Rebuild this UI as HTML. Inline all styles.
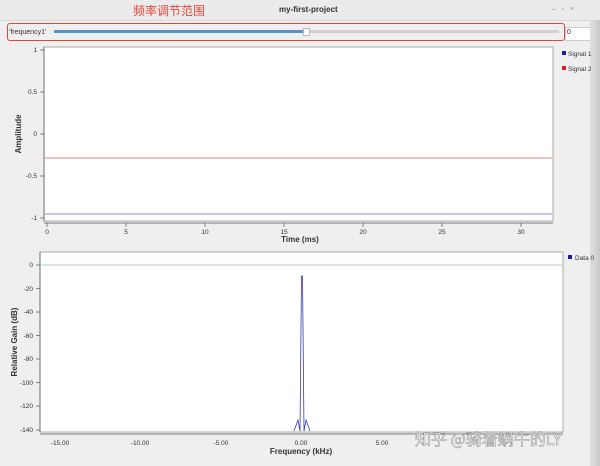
<!DOCTYPE html>
<html><head><meta charset="utf-8"><style>
body{margin:0;width:600px;height:466px;overflow:hidden;background:#efefef;font-family:"Liberation Sans","Noto Sans CJK SC",sans-serif;position:relative}
.a{position:absolute}
.t{font-size:7px;color:#333}
</style></head><body>
<div class="a" style="left:0;top:0;width:600px;height:20px;background:#ebebeb;border-bottom:1px solid #d8d8d8"></div>
<div class="a" style="left:133px;top:2px;font-size:12px;color:#e8443a">频率调节范围</div>
<div class="a" style="left:279px;top:5px;font-size:8px;font-weight:bold;color:#333">my-first-project</div>
<div class="a t" style="left:552px;top:6px;color:#999">–&nbsp;&nbsp;&nbsp;▫&nbsp;&nbsp;&nbsp;×</div>
<div class="a" style="left:7px;top:23px;width:556px;height:16px;border:1.5px solid #e0443a;border-radius:3px"></div>
<div class="a t" style="left:9px;top:29px">'frequency1'</div>
<div class="a" style="left:54px;top:30px;width:252px;height:3px;background:#5294c7"></div>
<div class="a" style="left:306px;top:30px;width:253px;height:3px;background:#d0d0d0"></div>
<div class="a" style="left:303px;top:28px;width:5px;height:6px;background:#fff;border:1px solid #bbb"></div>
<div class="a" style="left:565px;top:27px;width:28px;height:12px;background:#fff;border:1px solid #ccc"></div>
<div class="a t" style="left:567px;top:29px">0</div>
<div class="a" style="left:590px;top:20px;width:10px;height:446px;background:linear-gradient(90deg,#e0e0e0,#c9c9c9)"></div>
<svg class="a" style="left:0;top:0" width="600" height="466" font-family="Liberation Sans" font-size="6.5" fill="#333">
<rect x="44" y="47" width="509" height="174" fill="#fff" stroke="#aaa"/>
<line x1="45" y1="158" x2="552" y2="158" stroke="#e4a0a0" stroke-width="1.3"/>
<line x1="45" y1="214" x2="552" y2="214" stroke="#a8a8d8" stroke-width="1.3"/>
<g stroke="#555" stroke-width=".7">
<line x1="44" y1="47" x2="44" y2="221"/><line x1="44" y1="223" x2="553" y2="223"/>
<line x1="40" y1="50" x2="44" y2="50"/><line x1="40" y1="92" x2="44" y2="92"/><line x1="40" y1="134" x2="44" y2="134"/><line x1="40" y1="176" x2="44" y2="176"/><line x1="40" y1="218" x2="44" y2="218"/>
<line x1="47" y1="223" x2="47" y2="227"/><line x1="126" y1="223" x2="126" y2="227"/><line x1="205" y1="223" x2="205" y2="227"/><line x1="284" y1="223" x2="284" y2="227"/><line x1="363" y1="223" x2="363" y2="227"/><line x1="442" y1="223" x2="442" y2="227"/><line x1="521" y1="223" x2="521" y2="227"/>
</g>
<text x="37" y="52" text-anchor="end">1</text><text x="37" y="94" text-anchor="end">0.5</text><text x="37" y="136" text-anchor="end">0</text><text x="37" y="178" text-anchor="end">-0.5</text><text x="37" y="220" text-anchor="end">-1</text>
<g text-anchor="middle"><text x="47" y="234">0</text><text x="126" y="234">5</text><text x="205" y="234">10</text><text x="284" y="234">15</text><text x="363" y="234">20</text><text x="442" y="234">25</text><text x="521" y="234">30</text></g>
<text x="300" y="242" text-anchor="middle" font-size="8" font-weight="bold">Time (ms)</text>
<text transform="translate(21,134) rotate(-90)" text-anchor="middle" font-size="8" font-weight="bold">Amplitude</text>
<rect x="562" y="51" width="4" height="4" fill="#1a1aa8"/><text x="568" y="56">Signal 1</text>
<rect x="562" y="66" width="4" height="4" fill="#d42020"/><text x="568" y="71">Signal 2</text>

<rect x="40" y="252" width="523" height="180" fill="#fff" stroke="#aaa"/>
<line x1="41" y1="265" x2="562" y2="265" stroke="#a8d0d0" stroke-width="1"/>
<g stroke="#555" stroke-width=".7">
<line x1="40" y1="252" x2="40" y2="432"/><line x1="40" y1="434" x2="563" y2="434"/>
<line x1="36" y1="265" x2="40" y2="265"/><line x1="36" y1="288.5" x2="40" y2="288.5"/><line x1="36" y1="312" x2="40" y2="312"/><line x1="36" y1="335.5" x2="40" y2="335.5"/><line x1="36" y1="359" x2="40" y2="359"/><line x1="36" y1="382.5" x2="40" y2="382.5"/><line x1="36" y1="406" x2="40" y2="406"/><line x1="36" y1="430" x2="40" y2="430"/>
</g>
<g text-anchor="end"><text x="33" y="267">0</text><text x="33" y="291">-20</text><text x="33" y="314">-40</text><text x="33" y="338">-60</text><text x="33" y="361">-80</text><text x="33" y="385">-100</text><text x="33" y="408">-120</text><text x="33" y="432">-140</text></g>
<g text-anchor="middle"><text x="60" y="445">-15.00</text><text x="140" y="445">-10.00</text><text x="221" y="445">-5.00</text><text x="301" y="445">0.00</text><text x="382" y="445">5.00</text></g>
<text x="301" y="454" text-anchor="middle" font-size="8" font-weight="bold">Frequency (kHz)</text>
<text transform="translate(17,342) rotate(-90)" text-anchor="middle" font-size="8" font-weight="bold">Relative Gain (dB)</text>
<path d="M294,431 L298,420 L300,431 M300,431 L301.5,276 L302.5,276 L304,431 M304,431 L306,420 L310,431" stroke="#3a3ab8" stroke-width=".8" fill="none"/>
<rect x="568" y="255" width="4" height="4" fill="#1a1aa8"/><text x="575" y="260">Data 0</text>
<text x="415" y="445" font-size="16" fill="#fff" stroke="#888" stroke-width=".5" font-family="Noto Sans CJK SC">知乎 @骑着蜗牛的LY</text>
</svg>
</body></html>
